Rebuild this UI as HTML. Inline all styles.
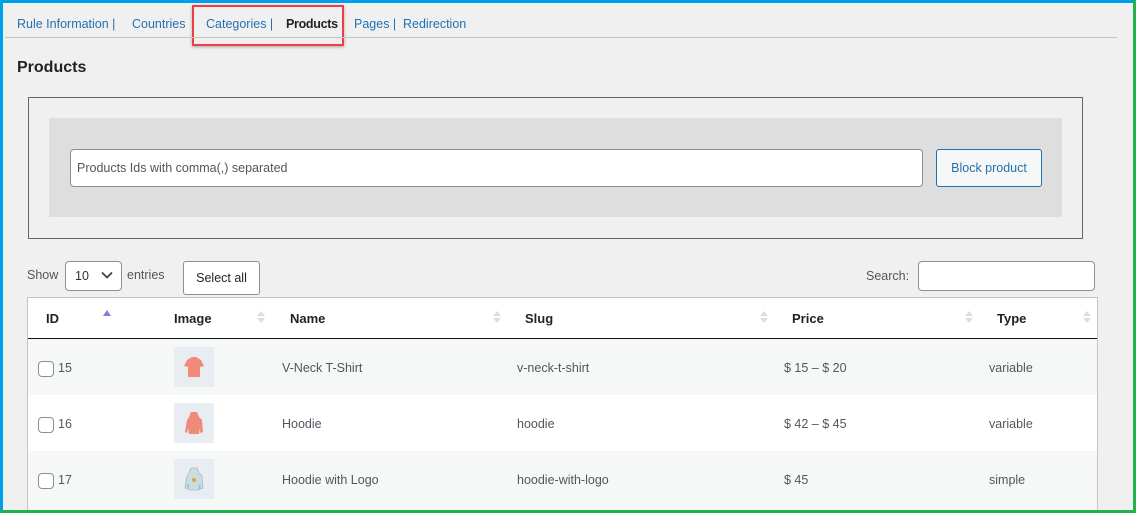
<!DOCTYPE html>
<html><head><style>
*{margin:0;padding:0;box-sizing:border-box}
body{width:1136px;height:513px;overflow:hidden;background:#f0f0f1;font-family:"Liberation Sans",sans-serif;font-size:12.5px;color:#50575e;position:relative}
.a{position:absolute;white-space:nowrap}
.tab{color:#2271b1;top:17px;font-size:12.5px}
.sort{position:absolute;width:8px;height:14px}
.sort:before,.sort:after{content:"";position:absolute;left:0;border-left:4px solid transparent;border-right:4px solid transparent}
.sort:before{top:0;border-bottom:5px solid #ddd}
.sort:after{top:7px;border-top:5px solid #ddd}
.th{position:absolute;top:311px;font-weight:bold;color:#1d2327;font-size:13px}
.cb{position:absolute;left:38px;width:16px;height:16px;border:1px solid #8c8f94;border-radius:4px;background:#fff}
.img{position:absolute;left:174px;width:40px;height:40px;background:#e8edf1}
</style></head><body>
<div class="a" style="left:0;top:0;width:1136px;height:3px;background:#00a0e9"></div>
<div class="a" style="left:0;top:0;width:3px;height:513px;background:#00a0e9"></div>
<div class="a" style="right:0;top:0;width:3px;height:513px;background:#22b14c"></div>
<div class="a" style="left:0;bottom:0;width:1136px;height:3px;background:#22b14c"></div>

<div class="a tab" style="left:17px">Rule Information |</div>
<div class="a tab" style="left:132px">Countries</div>
<div class="a tab" style="left:206px">Categories |</div>
<div class="a" style="left:286px;top:17px;font-weight:bold;color:#1d2327;font-size:12.5px;letter-spacing:-0.3px">Products</div>
<div class="a tab" style="left:354px">Pages |</div>
<div class="a tab" style="left:403px">Redirection</div>
<div class="a" style="left:192px;top:5px;width:152px;height:41px;border:2px solid #f03c46;box-shadow:0 1px 3px rgba(0,0,0,.3)"></div>
<div class="a" style="left:5px;top:37px;width:1112px;height:1px;background:#c3c4c7"></div>

<div class="a" style="left:17px;top:59px;font-size:16px;font-weight:bold;color:#1d2327">Products</div>

<div class="a" style="left:28px;top:97px;width:1055px;height:142px;border:1px solid #666"></div>
<div class="a" style="left:49px;top:118px;width:1013px;height:99px;background:#dedede"></div>
<div class="a" style="left:70px;top:149px;width:853px;height:38px;background:#fff;border:1px solid #8c8f94;border-radius:4px;padding:11px 6px;color:#50575e">Products Ids with comma(,) separated</div>
<div class="a" style="left:936px;top:149px;width:106px;height:38px;background:#f6f7f7;border:1px solid #2271b1;border-radius:3px;color:#2271b1;text-align:center;line-height:36px">Block product</div>

<div class="a" style="left:27px;top:268px">Show</div>
<div class="a" style="left:65px;top:261px;width:57px;height:30px;background:#fff;border:1px solid #8c8f94;border-radius:4px;padding:7px 9px;color:#2c3338">10</div>
<svg class="a" style="left:101px;top:271px" width="12" height="8"><path d="M1 1.5l5 5 5-5" stroke="#3c434a" stroke-width="1.8" fill="none"/></svg>
<div class="a" style="left:127px;top:268px">entries</div>
<div class="a" style="left:183px;top:261px;width:77px;height:34px;background:#fff;border:1px solid #8c8f94;border-radius:3px;text-align:center;line-height:32px;color:#1d2327">Select all</div>
<div class="a" style="left:866px;top:269px">Search:</div>
<div class="a" style="left:918px;top:261px;width:177px;height:30px;background:#fff;border:1px solid #8c8f94;border-radius:4px"></div>

<div class="a" style="left:27px;top:297px;width:1071px;height:213px;background:#fff;border:1px solid #c3c4c7;border-bottom:none"></div>
<div class="a" style="left:28px;top:338px;width:1069px;height:1px;background:#111"></div>
<div class="a" style="left:28px;top:339px;width:1069px;height:56px;background:#f6f7f7"></div>
<div class="a" style="left:28px;top:451px;width:1069px;height:59px;background:#f6f7f7"></div>

<div class="th" style="left:46px">ID</div>
<div class="a" style="left:103px;top:310px;border-left:4px solid transparent;border-right:4px solid transparent;border-bottom:6px solid #7b7fd6"></div>
<div class="th" style="left:174px">Image</div><div class="sort" style="left:257px;top:311px"></div>
<div class="th" style="left:290px">Name</div><div class="sort" style="left:493px;top:311px"></div>
<div class="th" style="left:525px">Slug</div><div class="sort" style="left:760px;top:311px"></div>
<div class="th" style="left:792px">Price</div><div class="sort" style="left:965px;top:311px"></div>
<div class="th" style="left:997px">Type</div><div class="sort" style="left:1083px;top:311px"></div>

<div class="cb" style="top:361px"></div><div class="a" style="left:58px;top:361px">15</div>
<div class="img" style="top:347px"><svg width="40" height="40"><path d="M13 13l5-3h4l5 3 3 6-4 1v10H14V20l-4-1z" fill="#f08a7a"/></svg></div>
<div class="a" style="left:282px;top:361px">V-Neck T-Shirt</div>
<div class="a" style="left:517px;top:361px">v-neck-t-shirt</div>
<div class="a" style="left:784px;top:361px">$ 15 – $ 20</div>
<div class="a" style="left:989px;top:361px">variable</div>

<div class="cb" style="top:417px"></div><div class="a" style="left:58px;top:417px">16</div>
<div class="img" style="top:403px"><svg width="40" height="40"><path d="M17 9h6l2 5 3 3 1 12-3 1v-5l-1 6H15l-1-6-1 5-2-1 2-12 2-3z" fill="#f08a7a"/></svg></div>
<div class="a" style="left:282px;top:417px">Hoodie</div>
<div class="a" style="left:517px;top:417px">hoodie</div>
<div class="a" style="left:784px;top:417px">$ 42 – $ 45</div>
<div class="a" style="left:989px;top:417px">variable</div>

<div class="cb" style="top:473px"></div><div class="a" style="left:58px;top:473px">17</div>
<div class="img" style="top:459px"><svg width="40" height="40"><path d="M17 9h6l2 5 3 3 1 12-3 1v-5l-1 6H15l-1-6-1 5-2-1 2-12 2-3z" fill="#c9dde3" stroke="#9ab" stroke-width=".6"/><circle cx="20" cy="21" r="2" fill="#d9a441"/></svg></div>
<div class="a" style="left:282px;top:473px">Hoodie with Logo</div>
<div class="a" style="left:517px;top:473px">hoodie-with-logo</div>
<div class="a" style="left:784px;top:473px">$ 45</div>
<div class="a" style="left:989px;top:473px">simple</div>
</body></html>
